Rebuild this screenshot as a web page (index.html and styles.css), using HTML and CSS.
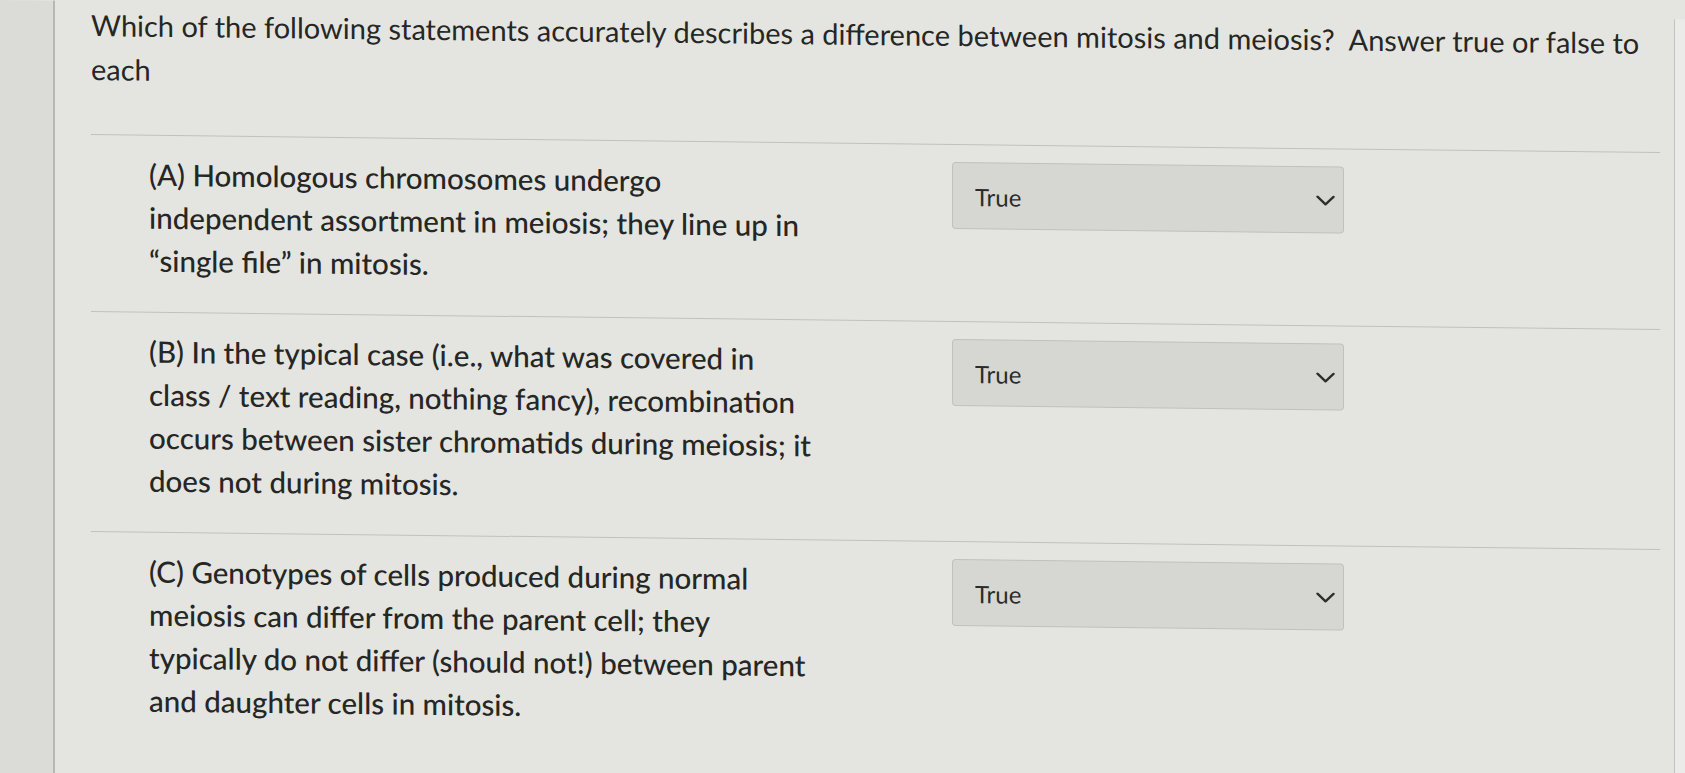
FILE: index.html
```html
<!DOCTYPE html>
<html lang="en">
<head>
<meta charset="utf-8">
<title>Mitosis vs meiosis</title>
<link rel="stylesheet" href="styles.css">
</head>
<body>
<div class="screen">
  <div class="gutter"></div>
  <main class="panel">
    <p class="question">Which of the following statements accurately describes a difference between mitosis and meiosis?&nbsp; Answer true or false to each</p>
    <div class="rows">
      <div class="row">
        <div class="stmt">(A) Homologous chromosomes undergo independent assortment in meiosis; they line up in “single file” in mitosis.</div>
        <div class="select"><span>True</span><svg class="chev" width="19" height="11" viewBox="0 0 19 11"><polyline points="1.5,1.5 9.5,9 17.5,1.5" fill="none" stroke="#2e2f2d" stroke-width="2.4" stroke-linecap="round" stroke-linejoin="round"/></svg></div>
      </div>
      <div class="row">
        <div class="stmt">(B) In the typical case (i.e., what was covered in class / text reading, nothing fancy), recombination occurs between sister chromatids during meiosis; it does not during mitosis.</div>
        <div class="select"><span>True</span><svg class="chev" width="19" height="11" viewBox="0 0 19 11"><polyline points="1.5,1.5 9.5,9 17.5,1.5" fill="none" stroke="#2e2f2d" stroke-width="2.4" stroke-linecap="round" stroke-linejoin="round"/></svg></div>
      </div>
      <div class="row">
        <div class="stmt">(C) Genotypes of cells produced during normal meiosis can differ from the parent cell; they typically do not differ (should not!) between parent and daughter cells in mitosis.</div>
        <div class="select"><span>True</span><svg class="chev" width="19" height="11" viewBox="0 0 19 11"><polyline points="1.5,1.5 9.5,9 17.5,1.5" fill="none" stroke="#2e2f2d" stroke-width="2.4" stroke-linecap="round" stroke-linejoin="round"/></svg></div>
      </div>
    </div>
  </main>
  <div class="edge"></div>
</div>
</body>
</html>
```

FILE: styles.css
```css
html, body {
  margin: 0;
  height: 100%;
  background: #e4e5e1;
}
body {
  font-family: Lato, "Open Sans", "Liberation Sans", sans-serif;
  color: #262725;
  overflow: hidden;
}
.screen {
  display: flex;
  height: 773px;
  transform: skewY(0.66deg);
  transform-origin: 0 0;
}
.gutter {
  flex: none;
  width: 53px;
  background: #dbdcd8;
  border-right: 2px solid #b7b8b4;
}
.panel {
  flex: 1;
  padding: 2px 14px 0 36px;
  background: #e4e5e1;
  border-right: 1px solid #c2c3bf;
}
.edge {
  flex: none;
  width: 10px;
  background: #ebece9;
}
.question {
  margin: 0;
  font-size: 29px;
  line-height: 44px;
}
.rows {
  margin-top: 43px;
}
.row {
  display: grid;
  grid-template-columns: 668px 392px;
  column-gap: 135px;
  align-items: start;
  padding: 17px 0 30px 58px;
  border-top: 1px solid #c0c1bd;
}
.stmt {
  font-size: 29.5px;
  font-weight: 500;
  line-height: 43px;
}
.select {
  box-sizing: border-box;
  height: 67px;
  display: flex;
  align-items: center;
  justify-content: space-between;
  padding: 2px 8px 0 22px;
  background: #d6d7d3;
  border: 1px solid #c0c1bd;
  border-radius: 4px;
  font-size: 24px;
  color: #2b2c2a;
}
.chev {
  display: block;
}
```
